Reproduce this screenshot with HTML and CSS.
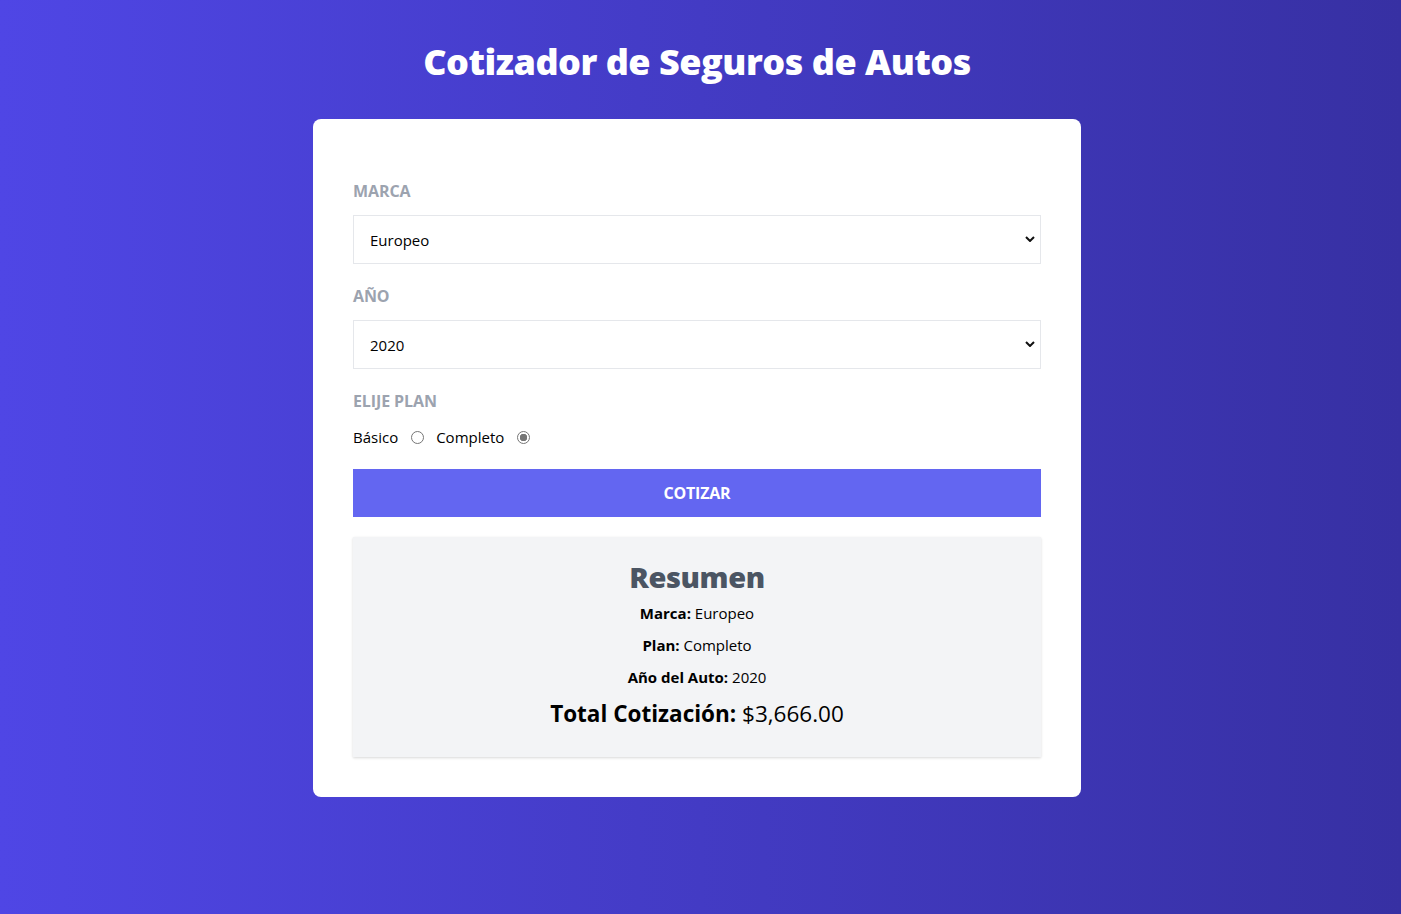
FILE: index.html
```
<!DOCTYPE html>
<html lang="es">
<head>
  <meta charset="UTF-8" />
  <meta name="viewport" content="width=device-width, initial-scale=1.0"/>
  <title>Cotizador de Seguros de Autos</title>
  <link rel="stylesheet" href="styles.css">
</head>
<body>
  <header>
    <h1>Cotizador de Seguros de Autos</h1>
  </header>

  <main class="card">
    <form class="form">
      <div class="field">
        <label class="label" for="marca">Marca</label>
        <div class="select-wrap">
          <select id="marca">
            <option value="1">Europeo</option>
            <option value="2">Americano</option>
            <option value="3">Asiático</option>
          </select>
          <svg class="chevron" viewBox="0 0 10 6" width="10" height="6"><path d="M1 1l4 4 4-4" fill="none" stroke="#111" stroke-width="2"/></svg>
        </div>
      </div>

      <div class="field">
        <label class="label" for="year">Año</label>
        <div class="select-wrap">
          <select id="year">
            <option>2020</option>
            <option>2019</option>
            <option>2018</option>
          </select>
          <svg class="chevron" viewBox="0 0 10 6" width="10" height="6"><path d="M1 1l4 4 4-4" fill="none" stroke="#111" stroke-width="2"/></svg>
        </div>
      </div>

      <div class="field">
        <span class="label">Elije Plan</span>
        <div class="plans">
          <label for="basico">Básico</label>
          <input type="radio" name="plan" id="basico" value="1">
          <label for="completo">Completo</label>
          <input type="radio" name="plan" id="completo" value="2" checked>
        </div>
      </div>

      <button type="button" class="btn">Cotizar</button>
    </form>

    <section class="resumen">
      <h2>Resumen</h2>
      <p><b>Marca:</b> Europeo</p>
      <p><b>Plan:</b> Completo</p>
      <p><b>Año del Auto:</b> 2020</p>
      <p class="total"><b>Total Cotización:</b> $3,666.00</p>
    </section>
  </main>
</body>
</html>
```

FILE: styles.css
```
* {
  box-sizing: border-box;
}
html, body {
  height: 100%;
}
body {
  margin: 0;
  padding-right: 7px;
  font-family: "Open Sans", "Noto Sans", sans-serif;
  font-size: 16px;
  line-height: 24px;
  color: #000;
  background: linear-gradient(to right, #4f46e5, #3730a3);
}
header {
  padding: 41px 0 0;
  text-align: center;
}
h1 {
  margin: 0 0 36px;
  color: #fff;
  font-size: 36px;
  line-height: 42px;
  font-weight: 800;
  letter-spacing: -0.5px;
}
.card {
  width: 768px;
  margin: 0 auto;
  background: #fff;
  border-radius: 8px;
  padding: 40px;
}
.form {
  padding-top: 20px;
}
.field {
  margin-bottom: 20px;
}
.label {
  display: block;
  color: #9ca3af;
  font-weight: 700;
  text-transform: uppercase;
  letter-spacing: -0.1px;
  margin-bottom: 12px;
}
.select-wrap {
  position: relative;
}
select {
  display: block;
  width: 100%;
  height: 49px;
  padding: 0 16px;
  font: inherit;
  font-size: 15px;
  color: #000;
  background: #fff;
  border: 1px solid #e5e7eb;
  border-radius: 0;
  appearance: none;
  -webkit-appearance: none;
}
.chevron {
  position: absolute;
  right: 6px;
  top: 21px;
  pointer-events: none;
}
.plans {
  display: flex;
  align-items: center;
  height: 24px;
  font-size: 15px;
}
.plans input {
  appearance: none;
  -webkit-appearance: none;
  width: 13px;
  height: 13px;
  margin: 0 12px 0 13px;
  border: 1px solid #767676;
  border-radius: 50%;
  background: #fff;
}
.plans input:checked {
  background: radial-gradient(circle, #767676 0 3.5px, #fff 4px);
}
.btn {
  display: block;
  width: 100%;
  height: 48px;
  border: 0;
  background: #6366f1;
  color: #fff;
  font: inherit;
  font-weight: 700;
  text-transform: uppercase;
  letter-spacing: -0.2px;
  cursor: pointer;
}
.btn:hover {
  background: #4f46e5;
}
.resumen {
  margin-top: 20px;
  padding: 20px;
  background: #f3f4f6;
  box-shadow: 0 1px 3px rgba(0,0,0,0.1), 0 1px 2px rgba(0,0,0,0.06);
  text-align: center;
}
.resumen h2 {
  margin: 2px 0 -2px;
  font-size: 29px;
  line-height: 36px;
  font-weight: 800;
  color: #4b5563;
  letter-spacing: -0.4px;
}
.resumen p {
  margin: 8px 0;
  font-size: 15px;
}
.resumen b {
  font-weight: 700;
}
.resumen .total {
  font-size: 22.5px;
  line-height: 32px;
  margin: 9px 0 7px;
}
```
